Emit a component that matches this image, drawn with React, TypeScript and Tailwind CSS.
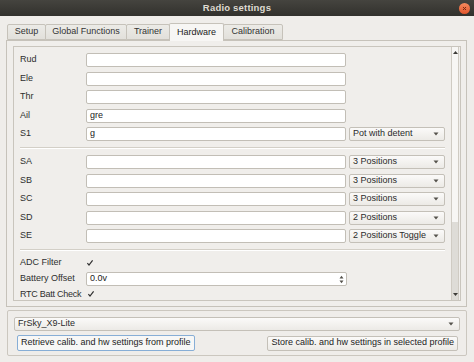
import React from 'react'

const font = { fontFamily: '"Liberation Sans", Arial, sans-serif' }

const Arrow = () => (
  <svg width="6" height="4" viewBox="0 0 6 4" className="shrink-0">
    <path d="M0.5 0.5 L5.5 0.5 L3 3.5 Z" fill="#55524c" />
  </svg>
)

const Check = () => (
  <div className="w-[8px] h-[8px] flex items-center justify-center">
    <svg width="8" height="8" viewBox="0 0 8 8">
      <path d="M1.4 4.2 L3 6.1 L6.6 1.4" stroke="#2f2f2f" strokeWidth="1.2" fill="none" />
    </svg>
  </div>
)

const Input = ({ value = '' }: { value?: string }) => (
  <div className="w-[260px] h-[14px] bg-white border border-[#c2beb6] rounded-[2px] flex items-center px-[3px] text-[#222]">
    {value}
  </div>
)

const Combo = ({ label, w = 'w-[96px]' }: { label: string; w?: string }) => (
  <div className={`${w} h-[14px] bg-gradient-to-b from-[#fbfaf9] to-[#eceae6] border border-[#c4c0b8] rounded-[2px] flex items-center justify-between pl-[3px] pr-[5px] text-[#2a2a2a]`}>
    <span>{label}</span>
    <Arrow />
  </div>
)

const Sep = () => (
  <div className="w-[425px] h-[2px] border-t border-[#d3cfc7] border-b border-b-white" />
)

const Row = ({ label, value, combo }: { label: string; value?: string; combo?: string }) => (
  <div className="flex items-center h-[14px]">
    <div className="w-[66px] text-[#2e2e2e]">{label}</div>
    <Input value={value} />
    {combo && <div className="ml-[3px]"><Combo label={combo} /></div>}
  </div>
)

const tabs = [
  { name: 'Setup', w: 'w-[39px]' },
  { name: 'Global Functions', w: 'w-[82px]' },
  { name: 'Trainer', w: 'w-[44px]' },
  { name: 'Hardware', w: 'w-[55px]', active: true },
  { name: 'Calibration', w: 'w-[60px]' },
]

export default function App() {
  return (
    <div className="w-[474px] h-[362px] bg-[#efedea] text-[9px] overflow-hidden flex flex-col" style={font}>
      {/* title bar */}
      <div className="h-[16px] bg-gradient-to-b from-[#45443f] to-[#32312d] flex items-center justify-center relative shrink-0">
        <span className="text-[#dfdbd2] font-bold text-[9.5px] tracking-[0.2px]">Radio settings</span>
        <div className="absolute right-[4px] top-[3px] w-[11px] h-[11px] rounded-full bg-gradient-to-b from-[#f58a5e] to-[#e2552b] flex items-center justify-center">
          <svg width="5" height="5" viewBox="0 0 5 5">
            <path d="M1 1 L4 4 M4 1 L1 4" stroke="#7a2a12" strokeWidth="1" />
          </svg>
        </div>
      </div>

      {/* tabs */}
      <div className="flex items-end pl-[7px] pt-[7px] h-[24px] shrink-0">
        {tabs.map(t => (
          <div
            key={t.name}
            className={`${t.w} flex items-center justify-center border border-[#c6c2ba] rounded-t-[2px] -mr-px ${
              t.active
                ? 'h-[18px] bg-[#f7f6f4] border-b-0 relative z-10 -mb-px text-[#222]'
                : 'h-[16px] bg-gradient-to-b from-[#ecebe7] to-[#e2e0db] text-[#333]'
            }`}
          >
            {t.name}
          </div>
        ))}
      </div>

      {/* pane */}
      <div className="ml-[6px] w-[461px] h-[267px] border border-[#c6c2ba] bg-[#f0eeeb] pt-[5px] pl-[6px] shrink-0">
        <div className="w-[448px] h-[255px] border border-[#c9c5bd] flex overflow-hidden">
          <div className="flex-1 pl-[6px] pt-[6px] flex flex-col">
            <div className="flex flex-col gap-[4.5px]">
              <Row label="Rud" />
              <Row label="Ele" />
              <Row label="Thr" />
              <Row label="Ail" value="gre" />
              <Row label="S1" value="g" combo="Pot with detent" />
            </div>
            <div className="mt-[6px] mb-[6px]"><Sep /></div>
            <div className="flex flex-col gap-[4.5px]">
              <Row label="SA" combo="3 Positions" />
              <Row label="SB" combo="3 Positions" />
              <Row label="SC" combo="3 Positions" />
              <Row label="SD" combo="2 Positions" />
              <Row label="SE" combo="2 Positions Toggle" />
            </div>
            <div className="mt-[6px] mb-[5px]"><Sep /></div>
            <div className="flex flex-col gap-[2px]">
              <div className="flex items-center h-[14px]">
                <div className="w-[66px] text-[#2e2e2e]">ADC Filter</div>
                <Check />
              </div>
              <div className="flex items-center h-[14px]">
                <div className="w-[66px] text-[#2e2e2e]">Battery Offset</div>
                <div className="w-[261px] h-[14px] bg-white border border-[#c2beb6] rounded-[2px] flex items-center justify-between pl-[3px] pr-[2px] text-[#222]">
                  <span>0.0v</span>
                  <svg width="5" height="9" viewBox="0 0 5 9">
                    <path d="M0.5 3.5 L2.5 0.8 L4.5 3.5 Z M0.5 5.5 L2.5 8.2 L4.5 5.5 Z" fill="#55524c" />
                  </svg>
                </div>
              </div>
              <div className="flex items-center h-[12px] leading-none">
                <div className="w-[66px] text-[#2e2e2e] tracking-[-0.25px] whitespace-nowrap">RTC Batt Check</div>
                <div className="ml-[1px]"><Check /></div>
              </div>
            </div>
          </div>
          {/* scrollbar */}
          <div className="w-[8px] h-full border-l border-r border-[#cfcbc3] bg-[#f7f6f4] flex flex-col items-center mr-px">
            <div className="h-[10px] flex items-center justify-center">
              <svg width="5" height="3" viewBox="0 0 5 3"><path d="M0 3 L2.5 0 L5 3 Z" fill="#3c3b37" /></svg>
            </div>
            <div className="flex-1" />
            <div className="w-full h-[66px] bg-[#dedcd7]" />
            <div className="h-[12px] w-full bg-[#dedcd7] flex items-center justify-center">
              <svg width="5" height="3" viewBox="0 0 5 3"><path d="M0 0 L2.5 3 L5 0 Z" fill="#3c3b37" /></svg>
            </div>
          </div>
        </div>
      </div>

      {/* profile group */}
      <div className="ml-[7px] mt-[3px] w-[460px] h-[46px] border border-[#cbc7bf] rounded-[2px] pl-[6px] pt-[6px] flex flex-col gap-[4px] shrink-0">
        <Combo label="FrSky_X9-Lite" w="w-[446px]" />
        <div className="flex items-center justify-between w-[444px] pl-[3px]">
          <div className="h-[16px] px-[3px] border border-[#87aed6] rounded-[2px] bg-[#f7f7f6] flex items-center text-[#222]">
            Retrieve calib. and hw settings from profile
          </div>
          <div className="h-[15px] px-[3px] border border-[#c4c0b8] rounded-[2px] bg-gradient-to-b from-[#fbfaf9] to-[#eceae6] flex items-center text-[#222]">
            Store calib. and hw settings in selected profile
          </div>
        </div>
      </div>
    </div>
  )
}
